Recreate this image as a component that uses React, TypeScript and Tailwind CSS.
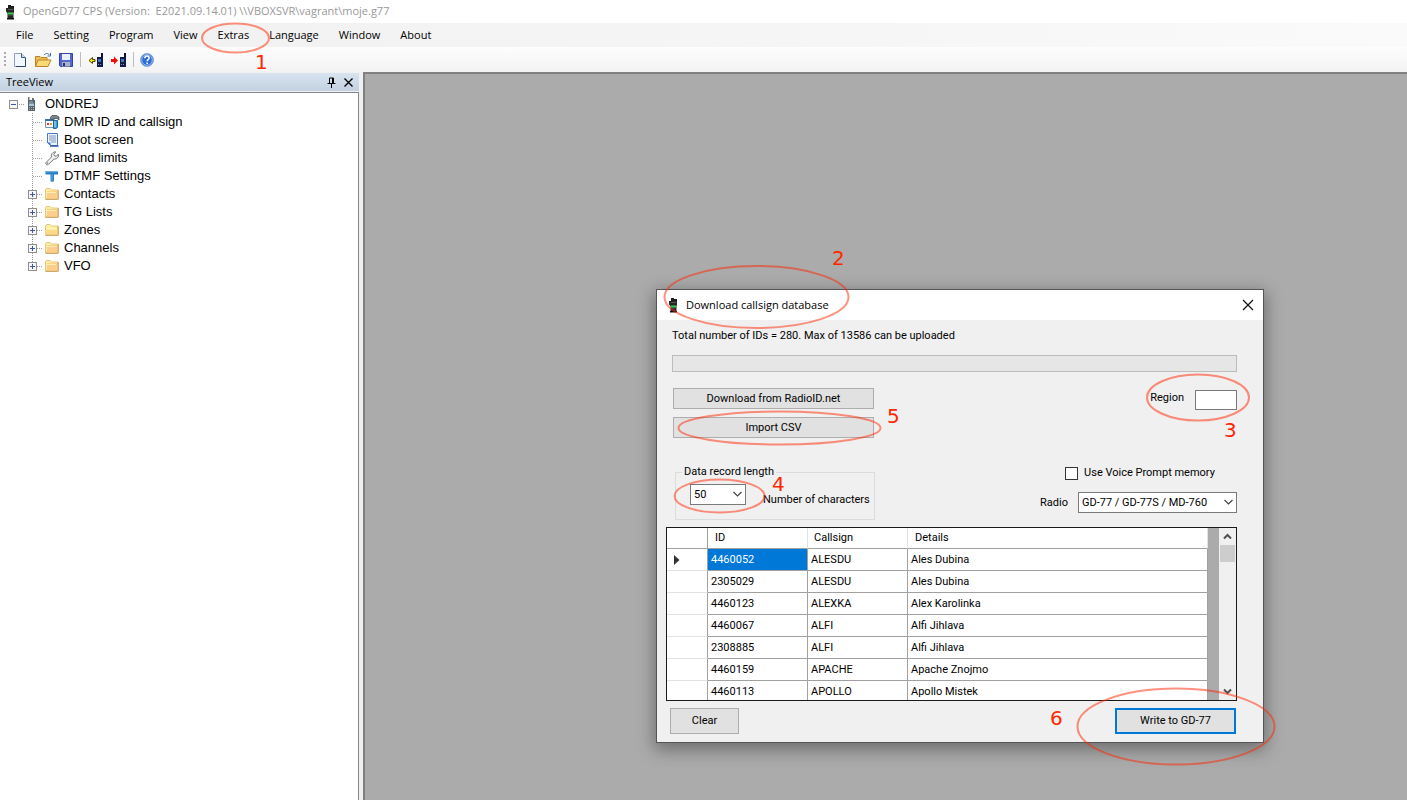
import type { ReactNode } from "react";
import clsx from "clsx";

const MENU = ["File", "Setting", "Program", "View", "Extras", "Language", "Window", "About"];

const TREE = [
  { label: "DMR ID and callsign", icon: "id" },
  { label: "Boot screen", icon: "boot" },
  { label: "Band limits", icon: "wrench" },
  { label: "DTMF Settings", icon: "dtmf" },
  { label: "Contacts", icon: "folder" },
  { label: "TG Lists", icon: "folder" },
  { label: "Zones", icon: "folderOpen" },
  { label: "Channels", icon: "folder" },
  { label: "VFO", icon: "folder" },
];

const ROWS = [
  ["4460052", "ALESDU", "Ales Dubina"],
  ["2305029", "ALESDU", "Ales Dubina"],
  ["4460123", "ALEXKA", "Alex Karolinka"],
  ["4460067", "ALFI", "Alfi Jihlava"],
  ["2308885", "ALFI", "Alfi Jihlava"],
  ["4460159", "APACHE", "Apache Znojmo"],
  ["4460113", "APOLLO", "Apollo Mistek"],
];

function RadioIcon() {
  return (
    <svg width="12" height="16" viewBox="0 0 12 16">
      <path d="M4 1h3v1h3v3H4z" fill="#1d1d1d" />
      <path d="M2 4h8v4L9.500 9v6h-6V9L2 7.500z" fill="#262626" />
      <path d="M4 5h5v1H4z" fill="#555" />
      <path d="M4 8.500h5v2H4z" fill="#2fd04b" />
      <path d="M4 11h5v1H4z" fill="#3e3e3e" />
      <path d="M3 14h7v1.500H3z" fill="#0d0d0d" />
    </svg>
  );
}

function GrayRadioIcon() {
  return (
    <svg width="12" height="16" viewBox="0 0 12 16">
      <path d="M3 1h1.500v4H3zM7 2h2v2H7z" fill="#6d757b" />
      <path d="M3 4h7v11H3z" fill="#59636b" />
      <path d="M4 5h4v2H4z" fill="#7f8b93" />
      <path d="M4 7.500h5v2.500H4z" fill="#a9c8dc" />
      <path d="M4 11h1v1H4zM6 11h1v1H6zM8 11h1v1H8zM4 13h1v1H4zM6 13h1v1H6zM8 13h1v1H8z" fill="#aab2b6" />
    </svg>
  );
}

function TreeIcon({ name }: { name: string }) {
  if (name === "id") {
    return (
      <svg width="16" height="16" viewBox="0 0 16 16">
        <path d="M1.500 5.500h9v8h-9z" fill="#f4f8fb" stroke="#7c93a6" />
        <path d="M1 5h9v2H1z" fill="#3f6f99" />
        <path d="M3 9h2v2H3z" fill="#e0402c" />
        <path d="M6 9h2v2H6z" fill="#e89b2c" />
        <path d="M9.500 6.500h4v7l-1.500 1H9.500z" fill="#3aa4e0" stroke="#23648e" />
        <path d="M6 4l2-2.500h4.500L15 3v3l-2-1.500H9L7.500 6z" fill="#7b868e" stroke="#37424a" strokeWidth=".7" />
        <path d="M11 7v6" stroke="#a7dcf7" />
      </svg>
    );
  }
  if (name === "boot") {
    return (
      <svg width="16" height="16" viewBox="0 0 16 16">
        <path d="M3.500 1.500h10v12H7l-3.500-3z" fill="#eef4fd" stroke="#4c78c8" />
        <path d="M5 4h7M5 6h7M5 8h7M7 10h5" stroke="#7f93b5" />
        <path d="M2 9.500L6.500 14V10.500H4z" fill="#3f73cd" />
        <path d="M6 14h8.500" stroke="#2d57a8" strokeWidth="1.500" />
      </svg>
    );
  }
  if (name === "wrench") {
    return (
      <svg width="16" height="16" viewBox="0 0 16 16">
        <path
          d="M2 12.500L7.500 7c-.7-2.300.6-4.700 3.300-5.200l1 .1-2 2.300.7 1.700 1.800.4 2-2.200c.8 2.800-1.300 5.300-4.400 4.900l-5.500 5.400c-1.500 1.200-3.300-.5-2.400-1.900z"
          fill="#f3f3f3"
          stroke="#777"
        />
        <circle cx="3.500" cy="13" r=".8" fill="#777" />
      </svg>
    );
  }
  if (name === "dtmf") {
    return (
      <svg width="16" height="16" viewBox="0 0 16 16">
        <path d="M1.500 3h12.500v3.500H10V13c0 1-3.500 1-3.500 0V6.500H1.500z" fill="#2b7fc7" />
        <path d="M1.500 3h12.500v1.200H1.500z" fill="#69b1e6" />
        <path d="M8 6v7" stroke="#5fa8e0" />
      </svg>
    );
  }
  return (
    <svg width="16" height="16" viewBox="0 0 16 16">
      <path d="M1.500 4l1-1.500h3.500L7.500 4H14v9H1.500z" fill="#fbf0a0" stroke="#d9bd6c" strokeWidth=".8" />
      <path
        d={name === "folder" ? "M3 5h11v8H2l1-3z" : "M1 8h13.500l-.5 5H1.500z"}
        fill={name === "folder" ? "#fdcf8c" : "#fbd987"}
      />
      <path d="M3 6.500h9" stroke="#fff2b8" />
      <path d="M14.200 4v9.300H1.500" fill="none" stroke="#c79f5a" />
    </svg>
  );
}

function HandsetIcon({ write = false }: { write?: boolean }) {
  return (
    <svg width="16" height="16" viewBox="0 0 16 16">
      {write ? (
        <path d="M0 7h3V4.500L7 8.500l-4 4V10H0z" fill="#f00d0d" />
      ) : (
        <path d="M7 7.500H4.500V5.500L1 8.500l3.500 3v-2H7z" fill="#f5ee12" stroke="#4b4700" />
      )}
      <path d="M13 1h2v6h-2z" fill="#0c1230" />
      <path d="M9 5h6v10H9z" fill="#111b48" />
      <path d="M10 7h3v3h-3z" fill="#4579bd" />
      <path d="M10 12h1v1h-1zM12 12h1v1h-1z" fill="#8094c8" />
    </svg>
  );
}

function ToolButton({ label, children }: { label: string; children: ReactNode }) {
  return (
    <button type="button" aria-label={label} className="flex h-[23px] w-[23px] items-center justify-center">
      {children}
    </button>
  );
}

// Dotted tree lines plus the plus box for nodes with children
function Guide({ expandable, last }: { expandable: boolean; last: boolean }) {
  return (
    <svg width="18" height="18" viewBox="0 0 18 18" shapeRendering="crispEdges">
      <path d={last ? "M6.500 0v9" : "M6.500 0v18"} stroke="#9a9a9a" strokeDasharray="1 1" />
      <path d="M7 9.500h10" stroke="#9a9a9a" strokeDasharray="1 1" />
      {expandable && (
        <g>
          <rect x="2.500" y="5.500" width="8" height="8" fill="#f6f6f6" stroke="#8f8f8f" />
          <path d="M4 9.500h5M6.500 7v5" stroke="#3a57a8" />
        </g>
      )}
    </svg>
  );
}

function Chevron() {
  return (
    <svg className="pointer-events-none absolute right-1 top-[7px]" width="9" height="7" viewBox="0 0 9 7">
      <path d="M.5 1l4 4 4-4" fill="none" stroke="#444" strokeWidth="1.200" />
    </svg>
  );
}

function Mark({ n, x, y }: { n: number; x: number; y: number }) {
  return (
    <text x={x} y={y} fill="#ff2600" fontSize="20" fontFamily="DejaVu Sans, sans-serif">
      {n}
    </text>
  );
}

function DialogButton({ children, className }: { children: ReactNode; className: string }) {
  return (
    <button type="button" className={clsx("flex items-center justify-center bg-[#e1e1e1]", className)}>
      {children}
    </button>
  );
}

function CallsignTable() {
  return (
    <div className="mt-[7px] flex h-[174px] border border-[#1a1a1a] bg-[#ababab]">
      <div className="h-full w-[541px] overflow-hidden">
        <table className="w-full table-fixed border-separate border-spacing-0 text-left">
          <colgroup>
            <col className="w-[41px]" />
            <col className="w-[100px]" />
            <col className="w-[100px]" />
            <col />
          </colgroup>
          <thead>
            <tr className="h-[21px] bg-white">
              <th className="border-b border-r border-[#a0a0a0] p-0" />
              <th className="border-b border-r border-b-[#a0a0a0] border-r-[#e2e2e2] p-0 pl-[7px] font-normal">ID</th>
              <th className="border-b border-r border-b-[#a0a0a0] border-r-[#e2e2e2] p-0 pl-[6px] font-normal">Callsign</th>
              <th className="border-b border-r border-b-[#a0a0a0] border-r-[#e2e2e2] p-0 pl-[7px] font-normal">Details</th>
            </tr>
          </thead>
          <tbody>
            {ROWS.map(([id, callsign, details], i) => (
              <tr key={id} className="h-[22px] bg-white">
                <td className="border-b border-r border-b-[#e2e2e2] border-r-[#a0a0a0] p-0 pl-[7px]">
                  {i === 0 && (
                    <svg width="6" height="10" viewBox="0 0 6 10">
                      <path d="M0 0l5.500 5L0 10z" fill="#333" />
                    </svg>
                  )}
                </td>
                <td className={clsx("border-b border-r border-[#a0a0a0] p-0 pl-[3px]", i === 0 && "bg-[#0078d7] text-white")}>
                  {id}
                </td>
                <td className="border-b border-r border-[#a0a0a0] p-0 pl-[3px]">{callsign}</td>
                <td className="border-b border-r border-[#a0a0a0] p-0 pl-[3px]">{details}</td>
              </tr>
            ))}
          </tbody>
        </table>
      </div>
      <div className="ml-auto flex w-[17px] flex-col items-center bg-[#f0f0f0]">
        <button type="button" aria-label="Scroll up" className="flex h-[17px] w-full items-center justify-center">
          <svg width="9" height="7" viewBox="0 0 9 7">
            <path d="M1 5.500l3.500-3.500L8 5.500" fill="none" stroke="#505050" strokeWidth="2" />
          </svg>
        </button>
        <div className="h-[17px] w-[15px] bg-[#cdcdcd]" />
        <button type="button" aria-label="Scroll down" className="mt-auto flex h-[17px] w-full items-center justify-center">
          <svg width="9" height="7" viewBox="0 0 9 7">
            <path d="M1 1.500L4.500 5 8 1.500" fill="none" stroke="#505050" strokeWidth="2" />
          </svg>
        </button>
      </div>
    </div>
  );
}

function CallsignDialog() {
  return (
    <section
      aria-label="Download callsign database"
      className="absolute left-[291px] top-[215px] w-[608px] border border-[#555] bg-[#f0f0f0] font-['Roboto',sans-serif] text-[11px] leading-4 text-black shadow-[0_5px_16px_2px_rgba(0,0,0,0.35)]"
    >
      <header className="flex h-[30px] items-center bg-white pl-[10px] pr-[9px] font-['Open_Sans',sans-serif]">
        <RadioIcon />
        <h2 className="ml-[7px]">Download callsign database</h2>
        <button type="button" aria-label="Close" className="ml-auto">
          <svg width="12" height="12" viewBox="0 0 12 12">
            <path d="M1 1l10 10M11 1L1 11" stroke="#111" strokeWidth="1.200" />
          </svg>
        </button>
      </header>

      <div className="pb-2 pl-[9px] pr-[26px] pt-2">
        <div className="pl-[6px]">
          <p>Total number of IDs = 280. Max of 13586 can be uploaded</p>
          <div role="progressbar" aria-label="Progress" className="mt-[11px] h-[17px] border border-[#bcbcbc] bg-[#e6e6e6]" />

          <div className="mt-4 flex items-start justify-between pl-px">
            <div className="flex w-[201px] flex-col gap-2">
              <DialogButton className="h-[21px] border border-[#adadad]">Download from RadioID.net</DialogButton>
              <DialogButton className="h-[21px] border border-[#adadad]">Import CSV</DialogButton>
            </div>
            <div className="flex items-start pt-[2px]">
              <label htmlFor="region">Region</label>
              <input id="region" className="ml-[11px] h-5 w-[42px] border border-[#7a7a7a] bg-white px-1" />
            </div>
          </div>

          <div className="mt-[26px] flex items-start justify-between pl-[3px]">
            <fieldset className="h-14 w-[200px] border border-[#dcdcdc]">
              <legend className="ml-[6px] px-[2px]">Data record length</legend>
              <div className="flex items-start pl-[14px] pt-1">
                <div className="relative">
                  <select
                    id="length"
                    defaultValue="50"
                    className="block h-[21px] w-14 appearance-none border border-[#7a7a7a] bg-white pl-[3px]"
                  >
                    <option>50</option>
                  </select>
                  <Chevron />
                </div>
                <label htmlFor="length" className="ml-[17px] mt-2 whitespace-nowrap">Number of characters</label>
              </div>
            </fieldset>
            <div>
              <div className="ml-[25px] flex items-center pt-px">
                <input
                  id="voice"
                  type="checkbox"
                  className="h-[13px] w-[13px] appearance-none border border-[#333] bg-white"
                />
                <label htmlFor="voice" className="ml-[6px]">Use Voice Prompt memory</label>
              </div>
              <div className="mt-[11px] flex items-center">
                <label htmlFor="radio">Radio</label>
                <div className="relative ml-[10px]">
                  <select
                    id="radio"
                    className="block h-[21px] w-[159px] appearance-none border border-[#7a7a7a] bg-white pl-[3px]"
                  >
                    <option>GD-77 / GD-77S / MD-760</option>
                  </select>
                  <Chevron />
                </div>
              </div>
            </div>
          </div>
        </div>

        <CallsignTable />

        <div className="mt-[7px] flex justify-between pl-1 pr-px">
          <DialogButton className="h-[26px] w-[69px] border border-[#adadad]">Clear</DialogButton>
          <DialogButton className="h-[26px] w-[121px] border-2 border-[#0078d7]">Write to GD-77</DialogButton>
        </div>
      </div>

      {/* Step annotations drawn over the dialog */}
      <svg
        className="pointer-events-none absolute left-0 top-0 overflow-visible"
        width="606"
        height="452"
        viewBox="657 290 606 452"
      >
        <g fill="none" stroke="#ff2600" strokeOpacity=".5" strokeWidth="2">
          <ellipse cx="756.500" cy="297" rx="92" ry="31" />
          <ellipse cx="1198" cy="397.500" rx="51" ry="23" />
          <ellipse cx="719.500" cy="496" rx="45" ry="16.500" />
          <ellipse cx="779.500" cy="428" rx="101" ry="16.500" />
          <ellipse cx="1176" cy="726.500" rx="98.500" ry="38" />
        </g>
        <Mark n={2} x={832} y={265} />
        <Mark n={3} x={1224} y={437} />
        <Mark n={4} x={772} y={491} />
        <Mark n={5} x={887} y={423} />
        <Mark n={6} x={1050} y={725} />
      </svg>
    </section>
  );
}

function TreePanel() {
  return (
    <aside className="flex w-[359px] shrink-0 flex-col pt-px">
      <div className="flex h-[18px] items-center bg-linear-to-b from-[#d8e4f0] to-[#c3d1e0] pl-[6px] pr-[6px] font-['Open_Sans',sans-serif] text-[11px]">
        <h2>TreeView</h2>
        <button type="button" aria-label="Pin" className="ml-auto">
          <svg width="9" height="11" viewBox="0 0 9 11">
            <path d="M2.500 1h4v5.500h-4zM.5 6.500h8M4.500 7v4M5.500 1v5" fill="none" stroke="#000" />
          </svg>
        </button>
        <button type="button" aria-label="Close panel" className="ml-2">
          <svg width="9" height="9" viewBox="0 0 9 9">
            <path d="M.5 .5l8 8M8.500 .5l-8 8" stroke="#000" strokeWidth="1.400" />
          </svg>
        </button>
      </div>
      <div className="mt-px flex-1 border-r border-t border-[#828790] bg-white pt-[2px] font-['Liberation_Sans',Arial,sans-serif] text-[13px] leading-[18px]">
        <div className="flex h-[18px] items-center pl-[9px]">
          <button type="button" aria-label="Collapse ONDREJ">
            <svg width="16" height="9" viewBox="0 0 16 9" shapeRendering="crispEdges">
              <rect x=".5" y=".5" width="8" height="8" fill="#f6f6f6" stroke="#8f8f8f" />
              <path d="M2 4.500h5" stroke="#3a57a8" />
              <path d="M10 4.500h6" stroke="#9a9a9a" strokeDasharray="1 1" />
            </svg>
          </button>
          <GrayRadioIcon />
          <span className="ml-2">ONDREJ</span>
        </div>
        <ul>
          {TREE.map((node, i) => (
            <li key={node.label} className="flex h-[18px] items-center pl-[26px]">
              <Guide expandable={node.icon.startsWith("folder")} last={i === TREE.length - 1} />
              <TreeIcon name={node.icon} />
              <span className="ml-1">{node.label}</span>
            </li>
          ))}
        </ul>
      </div>
    </aside>
  );
}

export default function App() {
  return (
    <div className="flex min-h-screen flex-col overflow-hidden bg-[#f0f0f0] text-black">
      <header className="flex h-[23px] items-center bg-white pl-1 font-['Open_Sans',sans-serif] text-[11px] text-[#999]">
        <RadioIcon />
        <h1 className="ml-[7px] whitespace-pre">{"OpenGD77 CPS (Version:  E2021.09.14.01) \\\\VBOXSVR\\vagrant\\moje.g77"}</h1>
      </header>

      <nav className="relative flex h-6 items-center gap-5 bg-linear-to-r from-[#f0f0f0] to-[#fafafa] pl-4 pt-px font-['Open_Sans',sans-serif] text-[11px]">
        {MENU.map((item) => (
          <button key={item} type="button">{item}</button>
        ))}
        <svg
          className="pointer-events-none absolute left-0 top-0 z-10 overflow-visible"
          width="280"
          height="50"
          viewBox="0 23 280 50"
        >
          <ellipse cx="235.500" cy="38" rx="33.500" ry="14.500" fill="none" stroke="#ff2600" strokeOpacity=".5" strokeWidth="2" />
          <Mark n={1} x={255} y={69} />
        </svg>
      </nav>

      <div className="flex h-[25px] items-center bg-linear-to-b from-[#fdfdfd] to-[#f3f3f3] pl-1">
        <svg width="4" height="15" viewBox="0 0 4 15">
          <path d="M1 0v15" stroke="#aaa" strokeWidth="2" strokeDasharray="2 2" />
        </svg>
        <ToolButton label="New">
          <svg width="16" height="16" viewBox="0 0 16 16">
            <path d="M2.500 1.500h7l4 4v9h-11z" fill="#f3f8ff" stroke="#8d9fba" />
            <path d="M9.500 1.500v4h4" fill="#cadcf2" stroke="#3d5b8a" />
            <path d="M13.500 6v8.500H4" fill="none" stroke="#2d4468" />
          </svg>
        </ToolButton>
        <ToolButton label="Open">
          <svg width="18" height="16" viewBox="0 0 18 16">
            <path d="M1.500 4.500h4.500l1 1h6v8.500H1.500z" fill="#eebc50" stroke="#b98524" />
            <path d="M4 8h13l-3 6.500H1.500z" fill="#fbd976" stroke="#b98524" />
            <path d="M10 3c2-2 4-2 5.500 0M16.500 1v3h-3" fill="none" stroke="#446c9e" />
          </svg>
        </ToolButton>
        <ToolButton label="Save">
          <svg width="16" height="16" viewBox="0 0 16 16">
            <path d="M1.500 1.500h13v13h-12l-1-1z" fill="#5468d0" stroke="#3443a0" />
            <path d="M4 2h8v6H4z" fill="#e9effb" />
            <path d="M4 10h8v4.500H4z" fill="#a9b1cb" />
            <path d="M5 11h2v3H5z" fill="#26336f" />
          </svg>
        </ToolButton>
        <div className="mx-[3px] h-[15px] w-px bg-[#bdbdbd]" />
        <ToolButton label="Read from radio">
          <HandsetIcon />
        </ToolButton>
        <ToolButton label="Write to radio">
          <HandsetIcon write />
        </ToolButton>
        <div className="ml-[3px] mr-px h-[15px] w-px bg-[#bdbdbd]" />
        <ToolButton label="Help">
          <svg width="16" height="16" viewBox="0 0 16 16">
            <circle cx="8" cy="8" r="6.500" fill="#2c6cd6" stroke="#8fa9cf" />
            <circle cx="8" cy="8" r="5.300" fill="none" stroke="#c8dcf8" strokeWidth=".7" />
            <path d="M5.800 6.300c.1-3 4.500-2.800 4.400-.2 0 1.500-2.100 1.600-2.100 3.200M8.100 10.600v1.500" fill="none" stroke="#fff" strokeWidth="1.500" />
          </svg>
        </ToolButton>
      </div>

      <main className="flex flex-1">
        <TreePanel />
        <div className="relative ml-1 flex-1 border-l-2 border-t-2 border-[#808080] bg-[#ababab]">
          <CallsignDialog />
        </div>
      </main>
    </div>
  );
}
